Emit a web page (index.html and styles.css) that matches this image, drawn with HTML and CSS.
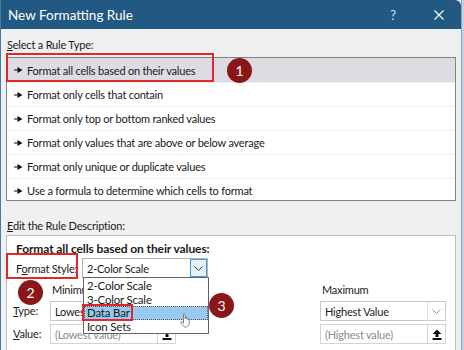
FILE: index.html
```html
<!DOCTYPE html>
<html lang="en">
<head>
  <meta charset="UTF-8" />
  <title>New Formatting Rule</title>
  <link rel="stylesheet" href="styles.css">
</head>
<body>
  <div class="dialog">
    <div class="titlebar">
      <span class="title">New Formatting Rule</span>
      <span class="help">?</span>
      <svg class="close" width="10" height="10" viewBox="0 0 10 10">
        <path d="M0.5 0.5L9.5 9.5M9.5 0.5L0.5 9.5" stroke="#fff" stroke-width="1.1" fill="none"/>
      </svg>
    </div>

    <div class="content">
      <div class="caption caption-top"><u>S</u>elect a Rule Type:</div>
      <ul class="rule-list">
        <li class="selected"><svg class="arrow" width="9" height="6" viewBox="0 0 9 6"><path d="M0 3h4" stroke="#111"/><path d="M3.5 0L8.5 3L3.5 6Z" fill="#111"/></svg>Format all cells based on their values</li>
        <li><svg class="arrow" width="9" height="6" viewBox="0 0 9 6"><path d="M0 3h4" stroke="#111"/><path d="M3.5 0L8.5 3L3.5 6Z" fill="#111"/></svg>Format only cells that contain</li>
        <li><svg class="arrow" width="9" height="6" viewBox="0 0 9 6"><path d="M0 3h4" stroke="#111"/><path d="M3.5 0L8.5 3L3.5 6Z" fill="#111"/></svg>Format only top or bottom ranked values</li>
        <li><svg class="arrow" width="9" height="6" viewBox="0 0 9 6"><path d="M0 3h4" stroke="#111"/><path d="M3.5 0L8.5 3L3.5 6Z" fill="#111"/></svg>Format only values that are above or below average</li>
        <li><svg class="arrow" width="9" height="6" viewBox="0 0 9 6"><path d="M0 3h4" stroke="#111"/><path d="M3.5 0L8.5 3L3.5 6Z" fill="#111"/></svg>Format only unique or duplicate values</li>
        <li><svg class="arrow" width="9" height="6" viewBox="0 0 9 6"><path d="M0 3h4" stroke="#111"/><path d="M3.5 0L8.5 3L3.5 6Z" fill="#111"/></svg>Use a formula to determine which cells to format</li>
      </ul>

      <div class="caption caption-edit"><u>E</u>dit the Rule Description:</div>
      <div class="desc">
        <div class="desc-title">Format all cells based on their values:</div>
        <div class="style-row">
          <span class="style-label">F<u>o</u>rmat Style:</span>
          <div class="select style-select">
            <span class="select-text">2-Color Scale</span>
            <span class="drop-btn active">
              <svg width="9" height="5" viewBox="0 0 9 5"><path d="M0.5 0.5L4.5 4.5L8.5 0.5" stroke="#333" fill="none"/></svg>
            </span>
            <ul class="drop-list">
              <li>2-Color Scale</li>
              <li>3-Color Scale</li>
              <li class="hover">Data Bar</li>
              <li>Icon Sets</li>
            </ul>
          </div>
        </div>

        <div class="minmax">
          <span></span>
          <span class="col-head">Minimum</span>
          <span></span>
          <span class="col-head">Maximum</span>

          <span class="row-label"><u>T</u>ype:</span>
          <div class="select"><span class="select-text">Lowest Value</span><span class="drop-btn"><svg width="9" height="5" viewBox="0 0 9 5"><path d="M0.5 0.5L4.5 4.5L8.5 0.5" stroke="#999" fill="none"/></svg></span></div>
          <span></span>
          <div class="select"><span class="select-text">Highest Value</span><span class="drop-btn"><svg width="9" height="5" viewBox="0 0 9 5"><path d="M0.5 0.5L4.5 4.5L8.5 0.5" stroke="#999" fill="none"/></svg></span></div>

          <span class="row-label"><u>V</u>alue:</span>
          <div class="input"><span class="placeholder">(Lowest value)</span><span class="pick-btn"><svg width="10" height="11" viewBox="0 0 10 11"><path d="M5 0.5L9.5 5H6.5V8H3.5V5H0.5Z" fill="#111"/><rect x="0.5" y="9" width="9" height="2" fill="#111"/></svg></span></div>
          <span></span>
          <div class="input"><span class="placeholder">(Highest value)</span><span class="pick-btn"><svg width="10" height="11" viewBox="0 0 10 11"><path d="M5 0.5L9.5 5H6.5V8H3.5V5H0.5Z" fill="#111"/><rect x="0.5" y="9" width="9" height="2" fill="#111"/></svg></span></div>

          <span></span>
          <div class="color-row"><span class="swatch min-color"></span><span class="swatch-btn"></span></div>
          <span></span>
          <div class="color-row"><span class="swatch max-color"></span><span class="swatch-btn"></span></div>
        </div>
      </div>
    </div>

    <!-- callouts drawn over the dialog -->
    <div class="mark mark-rule"></div>
    <div class="mark mark-style"></div>
    <div class="mark mark-bar"></div>
    <span class="badge badge-1">1</span>
    <span class="badge badge-2">2</span>
    <span class="badge badge-3">3</span>
    <svg class="cursor" width="12" height="16" viewBox="0 0 12 16">
      <path d="M3.5 7V2.2C3.5 1.4 5 1.4 5 2.2V6.5L5 5.8C5 5.1 6.4 5.1 6.4 5.8V6.8C6.4 6.1 7.8 6.1 7.8 6.8V7.6C7.8 7 9.2 7 9.2 7.6V11C9.2 13 8 15 6.5 15H5C3.8 15 3 13.8 2 12.5L0.8 10.6C0.4 9.9 1.3 9.2 1.9 9.8L3.5 11.3Z" fill="#fff" stroke="#666" stroke-width="0.8"/>
    </svg>
  </div>
</body>
</html>
```

FILE: styles.css
```css
body {
  margin: 0;
  background: #c5d1dc;
  font-family: Lato, 'Noto Sans', sans-serif;
  font-size: 11px;
  letter-spacing: -0.2px;
  color: #1a1a1a;
  overflow: hidden;
}

.dialog {
  position: relative;
  width: 460px;
  height: 350px;
  background: #f0f0f0;
  border-left: 1px solid #4a7aa3;
  border-right: 1px solid #8aa4bc;
  overflow: hidden;
}

.titlebar {
  display: flex;
  align-items: center;
  height: 29px;
  padding-left: 7px;
  background: #225982;
  color: #fff;
  border-top-right-radius: 6px;
  letter-spacing: 0;
}

.title {
  flex: 1;
  font-size: 13.5px;
}

.help {
  color: #d6e2ec;
  font-size: 13px;
  margin-right: 38px;
}

.close {
  margin-right: 17px;
}

.content {
  padding: 0 5px;
}

.caption {
  height: 16px;
  line-height: 16px;
  padding-left: 1px;
}

.caption-top {
  margin-top: 8px;
  margin-bottom: 4px;
}

.caption-edit {
  margin-top: 17px;
  margin-bottom: 1px;
}

.rule-list {
  list-style: none;
  margin: 0;
  padding: 0;
  background: #fff;
  border: 1px solid #828282;
  height: 142px;
}

.rule-list li {
  display: flex;
  align-items: center;
  height: 23px;
  padding-left: 7px;
  border-bottom: 1px solid #f0f0f0;
  white-space: nowrap;
}

.rule-list li:last-child {
  border-bottom: none;
}

.rule-list li.selected {
  background: #dcdce2;
  height: 24px;
}

.arrow {
  margin-right: 4px;
}

.desc {
  background: #fff;
  border: 1px solid #bcbcbc;
  height: 140px;
  padding: 5px 6px 0 6px;
}

.desc-title {
  font-weight: bold;
  font-size: 12px;
  letter-spacing: -0.1px;
  line-height: 16px;
  padding-left: 3px;
}

.style-row {
  display: flex;
  align-items: center;
  margin-top: 1px;
  height: 20px;
}

.style-label {
  width: 66px;
  padding-left: 3px;
  white-space: nowrap;
}

.select {
  position: relative;
  display: flex;
  align-items: center;
  height: 18px;
  border: 1px solid #c8c8c8;
  background: #fff;
}

.style-select {
  width: 124px;
  border-color: #b4b4b4;
}

.select-text {
  flex: 1;
  padding-left: 4px;
  white-space: nowrap;
  overflow: hidden;
}

.drop-btn {
  display: flex;
  align-items: center;
  justify-content: center;
  width: 17px;
  height: 18px;
  border-left: 1px solid #e0e0e0;
}

.drop-btn.active {
  width: 15px;
  height: 16px;
  background: #e5f1fb;
  border: 1px solid #3d9be9;
}

.drop-list {
  position: absolute;
  top: 18px;
  left: 0;
  width: 124px;
  margin: 0;
  padding: 1px 0 0 0;
  list-style: none;
  background: #fff;
  border: 1px solid #646464;
  z-index: 2;
}

.drop-list li {
  height: 13.5px;
  line-height: 13.5px;
  padding-left: 3px;
  white-space: nowrap;
  font-size: 11.5px;
}

.drop-list li.hover {
  background: #99c9ef;
  outline: 1px dotted #555;
  outline-offset: -1px;
}

.minmax {
  display: grid;
  grid-template-columns: 37px 126px 144px 126px;
  grid-template-rows: 16px 20px 20px 20px;
  row-gap: 3px;
  margin-top: 4px;
  align-items: center;
}

.col-head {
  line-height: 16px;
  padding-left: 2px;
}

.row-label {
  line-height: 16px;
  white-space: nowrap;
}

.input {
  display: flex;
  align-items: center;
  height: 18px;
  border: 1px solid #d4d4d4;
}

.placeholder {
  flex: 1;
  padding-left: 4px;
  color: #8a8a8a;
  white-space: nowrap;
}

.pick-btn {
  display: flex;
  align-items: center;
  justify-content: center;
  width: 17px;
  height: 18px;
  border-left: 1px solid #d4d4d4;
}

.color-row {
  display: flex;
  height: 20px;
  align-self: end;
  margin-bottom: -3px;
}

.swatch {
  flex: 1;
  border: 1px solid #c8c8c8;
}

.min-color {
  background: #f8691f;
}

.max-color {
  background: #ffe78c;
}

.swatch-btn {
  width: 17px;
  border: 1px solid #d4d4d4;
  border-left: none;
}

.mark {
  position: absolute;
  border: 2px solid #e4262b;
}

.mark-rule {
  left: 5px;
  top: 53px;
  width: 204px;
  height: 25px;
}

.mark-style {
  left: 5px;
  top: 253px;
  width: 68px;
  height: 22px;
}

.mark-bar {
  left: 81px;
  top: 304px;
  width: 47px;
  height: 13px;
  z-index: 3;
}

.badge {
  position: absolute;
  width: 25px;
  height: 25px;
  border-radius: 50%;
  background: #8b1617;
  color: #fff;
  font-size: 14px;
  letter-spacing: 0;
  line-height: 25px;
  text-align: center;
  z-index: 3;
}

.badge-1 {
  left: 226px;
  top: 58px;
}

.badge-2 {
  left: 17px;
  top: 280px;
}

.badge-3 {
  left: 208px;
  top: 293px;
}

.cursor {
  position: absolute;
  left: 179px;
  top: 312px;
  z-index: 4;
}
```
